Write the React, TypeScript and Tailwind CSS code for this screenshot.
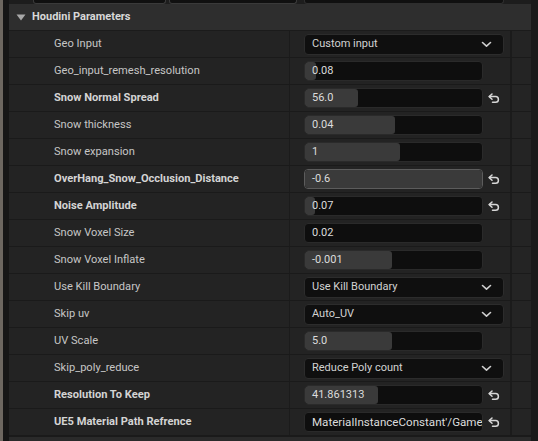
import React from 'react'

type Row =
  | { label: string; bold?: boolean; kind: 'select'; value: string }
  | { label: string; bold?: boolean; kind: 'number'; value: string; fill: number; reset?: boolean; active?: boolean }
  | { label: string; bold?: boolean; kind: 'text'; value: string; reset?: boolean }

const rows: Row[] = [
  { label: 'Geo Input', kind: 'select', value: 'Custom input' },
  { label: 'Geo_input_remesh_resolution', kind: 'number', value: '0.08', fill: 11 },
  { label: 'Snow Normal Spread', bold: true, kind: 'number', value: '56.0', fill: 53, reset: true },
  { label: 'Snow thickness', kind: 'number', value: '0.04', fill: 90 },
  { label: 'Snow expansion', kind: 'number', value: '1', fill: 95 },
  { label: 'OverHang_Snow_Occlusion_Distance', bold: true, kind: 'number', value: '-0.6', fill: 179, reset: true, active: true },
  { label: 'Noise Amplitude', bold: true, kind: 'number', value: '0.07', fill: 10, reset: true },
  { label: 'Snow Voxel Size', kind: 'number', value: '0.02', fill: 0 },
  { label: 'Snow Voxel Inflate', kind: 'number', value: '-0.001', fill: 87 },
  { label: 'Use Kill Boundary', kind: 'select', value: 'Use Kill Boundary' },
  { label: 'Skip uv', kind: 'select', value: 'Auto_UV' },
  { label: 'UV Scale', kind: 'number', value: '5.0', fill: 87 },
  { label: 'Skip_poly_reduce', kind: 'select', value: 'Reduce Poly count' },
  { label: 'Resolution To Keep', bold: true, kind: 'number', value: '41.861313', fill: 73, reset: true },
  { label: 'UE5 Material Path Refrence', bold: true, kind: 'text', value: "MaterialInstanceConstant'/Game", reset: true },
]

function ResetIcon() {
  return (
    <svg width="12" height="11" viewBox="0 0 12 11" fill="none" stroke="#d6d6d6" strokeWidth="1.5" strokeLinecap="round" strokeLinejoin="round">
      <path d="M4 1 L1.2 3.6 L4 6.2" />
      <path d="M1.4 3.6 H7.6 A2.8 2.8 0 0 1 7.6 9.2 H4.5" />
    </svg>
  )
}

function Chevron() {
  return (
    <svg width="11" height="7" viewBox="0 0 11 7" fill="none" stroke="#cfcfcf" strokeWidth="1.6" strokeLinecap="round" strokeLinejoin="round">
      <path d="M1.5 1.5 L5.5 5.2 L9.5 1.5" />
    </svg>
  )
}

function ValueCell({ row }: { row: Row }) {
  if (row.kind === 'select') {
    return (
      <div className="w-[200px] h-[21px] rounded-[4px] bg-[#0f0f0f] border border-[#2c2c2c] flex items-center justify-between pl-[7px] pr-[11px]">
        <span className="text-[11px] text-[#d2d2d2]">{row.value}</span>
        <Chevron />
      </div>
    )
  }
  return (
    <div className="flex items-center">
      <div
        className={`relative w-[179px] h-[20px] rounded-[4px] bg-[#0e0e0e] border overflow-hidden ${
          row.kind === 'number' && row.active ? 'border-[#5c5c5c]' : 'border-[#2a2a2a]'
        }`}
      >
        {row.kind === 'number' && row.fill > 0 && (
          <div className="absolute left-0 top-0 bottom-0 bg-[#3a3a3a] rounded-[3px]" style={{ width: row.fill }} />
        )}
        <span
          className={`relative block pl-[7px] leading-[18px] text-[#dcdcdc] whitespace-nowrap overflow-hidden ${
            row.kind === 'text' ? 'text-[11.6px]' : 'text-[11px]'
          }`}
        >
          {row.value}
        </span>
      </div>
      {row.reset && (
        <div className="ml-[5px] flex items-center">
          <ResetIcon />
        </div>
      )}
    </div>
  )
}

export default function App() {
  return (
    <div className="w-[538px] h-[441px] overflow-hidden flex bg-[#151515]" style={{ fontFamily: 'Roboto, "Liberation Sans", sans-serif' }}>
      {/* viewport edge */}
      <div className="w-[3px] bg-[#6d6760]" />
      <div className="w-[6px] bg-[#161616]" />

      {/* details panel */}
      <div className="w-[522px] flex flex-col bg-[#232323]">
        {/* cut off row above */}
        <div className="h-[4px] bg-[#1d1d1d] flex gap-[3px] pl-[24px]">
          <div className="w-[133px] bg-[#101010] border-b border-x border-[#3a3a3a] rounded-b-[3px]" />
          <div className="w-[128px] bg-[#101010] border-b border-x border-[#3a3a3a] rounded-b-[3px]" />
          <div className="w-[200px] ml-[4px] bg-[#101010] border-b border-x border-[#2e2e2e] rounded-b-[3px]" />
        </div>

        {/* header */}
        <div className="h-[27px] bg-[#2e2e2e] border-b border-[#1b1b1b] flex items-center pl-[7px]">
          <svg width="10" height="7" viewBox="0 0 10 7" className="mr-[6px]">
            <path d="M0.5 0.5 H9.5 L5 6.5 Z" fill="#a8a8a8" />
          </svg>
          <span className="text-[11px] font-bold text-[#d8d8d8]">Houdini Parameters</span>
        </div>

        {/* parameters */}
        {rows.map((row) => (
          <div key={row.label} className="h-[27px] flex border-b border-[#1a1a1a]">
            <div className="w-[281px] flex items-center pl-[45px] border-r border-[#1b1b1b]">
              <span className={`text-[11.1px] ${row.bold ? 'font-bold text-[#d4d4d4]' : 'text-[#c6c6c6]'}`}>{row.label}</span>
            </div>
            <div className="w-[222px] flex items-center pl-[14px] border-r-2 border-[#1b1b1b]">
              <ValueCell row={row} />
            </div>
            <div className="flex-1 bg-[#242424]" />
          </div>
        ))}
        <div className="flex-1 bg-[#2a2a2a] border-t border-[#1a1a1a]" />
      </div>

      <div className="flex-1 bg-[#1a1a1a]" />
    </div>
  )
}
